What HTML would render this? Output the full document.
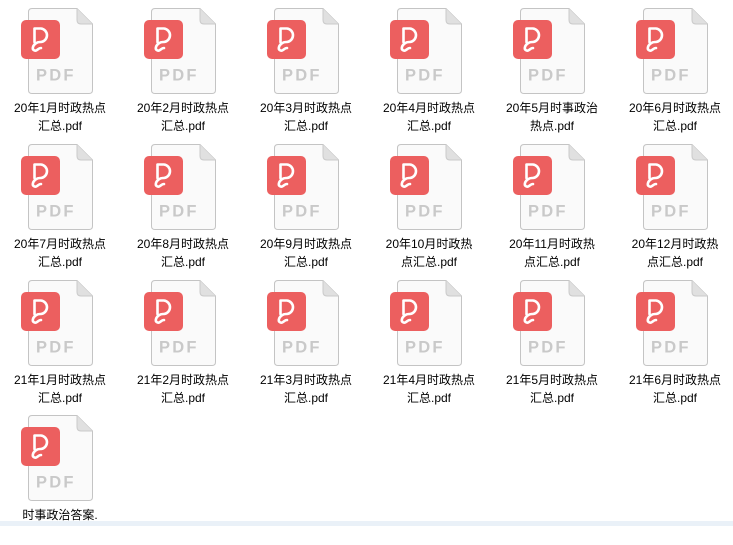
<!DOCTYPE html><html><head><meta charset="utf-8"><style>
body{margin:0;width:733px;height:526px;background:#fff;position:relative;overflow:hidden;font-family:"Liberation Sans","Noto Sans CJK SC",sans-serif}
.c{position:absolute;width:110px;height:130px}
.pg{position:absolute;left:-10px;top:0}
.lb{position:absolute;left:-28px;width:120px;top:91px;text-align:center;font-size:12px;line-height:18px;color:#000}
.bot{position:absolute;left:0;right:0;top:521px;height:5px;background:#eaf1f8}
</style></head><body>
<svg width="0" height="0" style="position:absolute"><defs>
<g id="ic">
<path d="M4 0.5 H49 L64.5 16 V82 Q64.5 85.5 61 85.5 H4 Q0.5 85.5 0.5 82 V4 Q0.5 0.5 4 0.5Z" fill="#fafafa" stroke="#c4c4c4"/>
<path d="M49 0.5 V12 Q49 16 53 16 H64.5" fill="#e0e0e0" stroke="#cacaca"/>
<rect x="-7" y="12" width="39" height="39" rx="5" fill="#ec5f5f"/>
<path d="M6.5 34 V20.5 H13 A6.8 6.8 0 0 1 13 34 H12 C9 34 6 36 5 39 C4 42 7 43.5 9 42 C10.5 41 11 40 13 40" fill="none" stroke="#fff" stroke-width="2.6" stroke-linecap="round" stroke-linejoin="round"/>
<text x="8" y="72.5" font-family="Liberation Sans" font-weight="bold" font-size="16.5" fill="#c9c9c9" letter-spacing="2.2">PDF</text>
</g></defs></svg>
<div class="c" style="left:28px;top:8px"><svg class="pg" width="110" height="90" viewBox="-10 0 110 90"><use href="#ic"/></svg><div class="lb">20年1月时政热点<br>汇总.pdf</div></div>
<div class="c" style="left:151px;top:8px"><svg class="pg" width="110" height="90" viewBox="-10 0 110 90"><use href="#ic"/></svg><div class="lb">20年2月时政热点<br>汇总.pdf</div></div>
<div class="c" style="left:274px;top:8px"><svg class="pg" width="110" height="90" viewBox="-10 0 110 90"><use href="#ic"/></svg><div class="lb">20年3月时政热点<br>汇总.pdf</div></div>
<div class="c" style="left:397px;top:8px"><svg class="pg" width="110" height="90" viewBox="-10 0 110 90"><use href="#ic"/></svg><div class="lb">20年4月时政热点<br>汇总.pdf</div></div>
<div class="c" style="left:520px;top:8px"><svg class="pg" width="110" height="90" viewBox="-10 0 110 90"><use href="#ic"/></svg><div class="lb">20年5月时事政治<br>热点.pdf</div></div>
<div class="c" style="left:643px;top:8px"><svg class="pg" width="110" height="90" viewBox="-10 0 110 90"><use href="#ic"/></svg><div class="lb">20年6月时政热点<br>汇总.pdf</div></div>
<div class="c" style="left:28px;top:144px"><svg class="pg" width="110" height="90" viewBox="-10 0 110 90"><use href="#ic"/></svg><div class="lb">20年7月时政热点<br>汇总.pdf</div></div>
<div class="c" style="left:151px;top:144px"><svg class="pg" width="110" height="90" viewBox="-10 0 110 90"><use href="#ic"/></svg><div class="lb">20年8月时政热点<br>汇总.pdf</div></div>
<div class="c" style="left:274px;top:144px"><svg class="pg" width="110" height="90" viewBox="-10 0 110 90"><use href="#ic"/></svg><div class="lb">20年9月时政热点<br>汇总.pdf</div></div>
<div class="c" style="left:397px;top:144px"><svg class="pg" width="110" height="90" viewBox="-10 0 110 90"><use href="#ic"/></svg><div class="lb">20年10月时政热<br>点汇总.pdf</div></div>
<div class="c" style="left:520px;top:144px"><svg class="pg" width="110" height="90" viewBox="-10 0 110 90"><use href="#ic"/></svg><div class="lb">20年11月时政热<br>点汇总.pdf</div></div>
<div class="c" style="left:643px;top:144px"><svg class="pg" width="110" height="90" viewBox="-10 0 110 90"><use href="#ic"/></svg><div class="lb">20年12月时政热<br>点汇总.pdf</div></div>
<div class="c" style="left:28px;top:280px"><svg class="pg" width="110" height="90" viewBox="-10 0 110 90"><use href="#ic"/></svg><div class="lb">21年1月时政热点<br>汇总.pdf</div></div>
<div class="c" style="left:151px;top:280px"><svg class="pg" width="110" height="90" viewBox="-10 0 110 90"><use href="#ic"/></svg><div class="lb">21年2月时政热点<br>汇总.pdf</div></div>
<div class="c" style="left:274px;top:280px"><svg class="pg" width="110" height="90" viewBox="-10 0 110 90"><use href="#ic"/></svg><div class="lb">21年3月时政热点<br>汇总.pdf</div></div>
<div class="c" style="left:397px;top:280px"><svg class="pg" width="110" height="90" viewBox="-10 0 110 90"><use href="#ic"/></svg><div class="lb">21年4月时政热点<br>汇总.pdf</div></div>
<div class="c" style="left:520px;top:280px"><svg class="pg" width="110" height="90" viewBox="-10 0 110 90"><use href="#ic"/></svg><div class="lb">21年5月时政热点<br>汇总.pdf</div></div>
<div class="c" style="left:643px;top:280px"><svg class="pg" width="110" height="90" viewBox="-10 0 110 90"><use href="#ic"/></svg><div class="lb">21年6月时政热点<br>汇总.pdf</div></div>
<div class="c" style="left:28px;top:415px"><svg class="pg" width="110" height="90" viewBox="-10 0 110 90"><use href="#ic"/></svg><div class="lb">时事政治答案.</div></div>
<div class="bot"></div>
</body></html>
